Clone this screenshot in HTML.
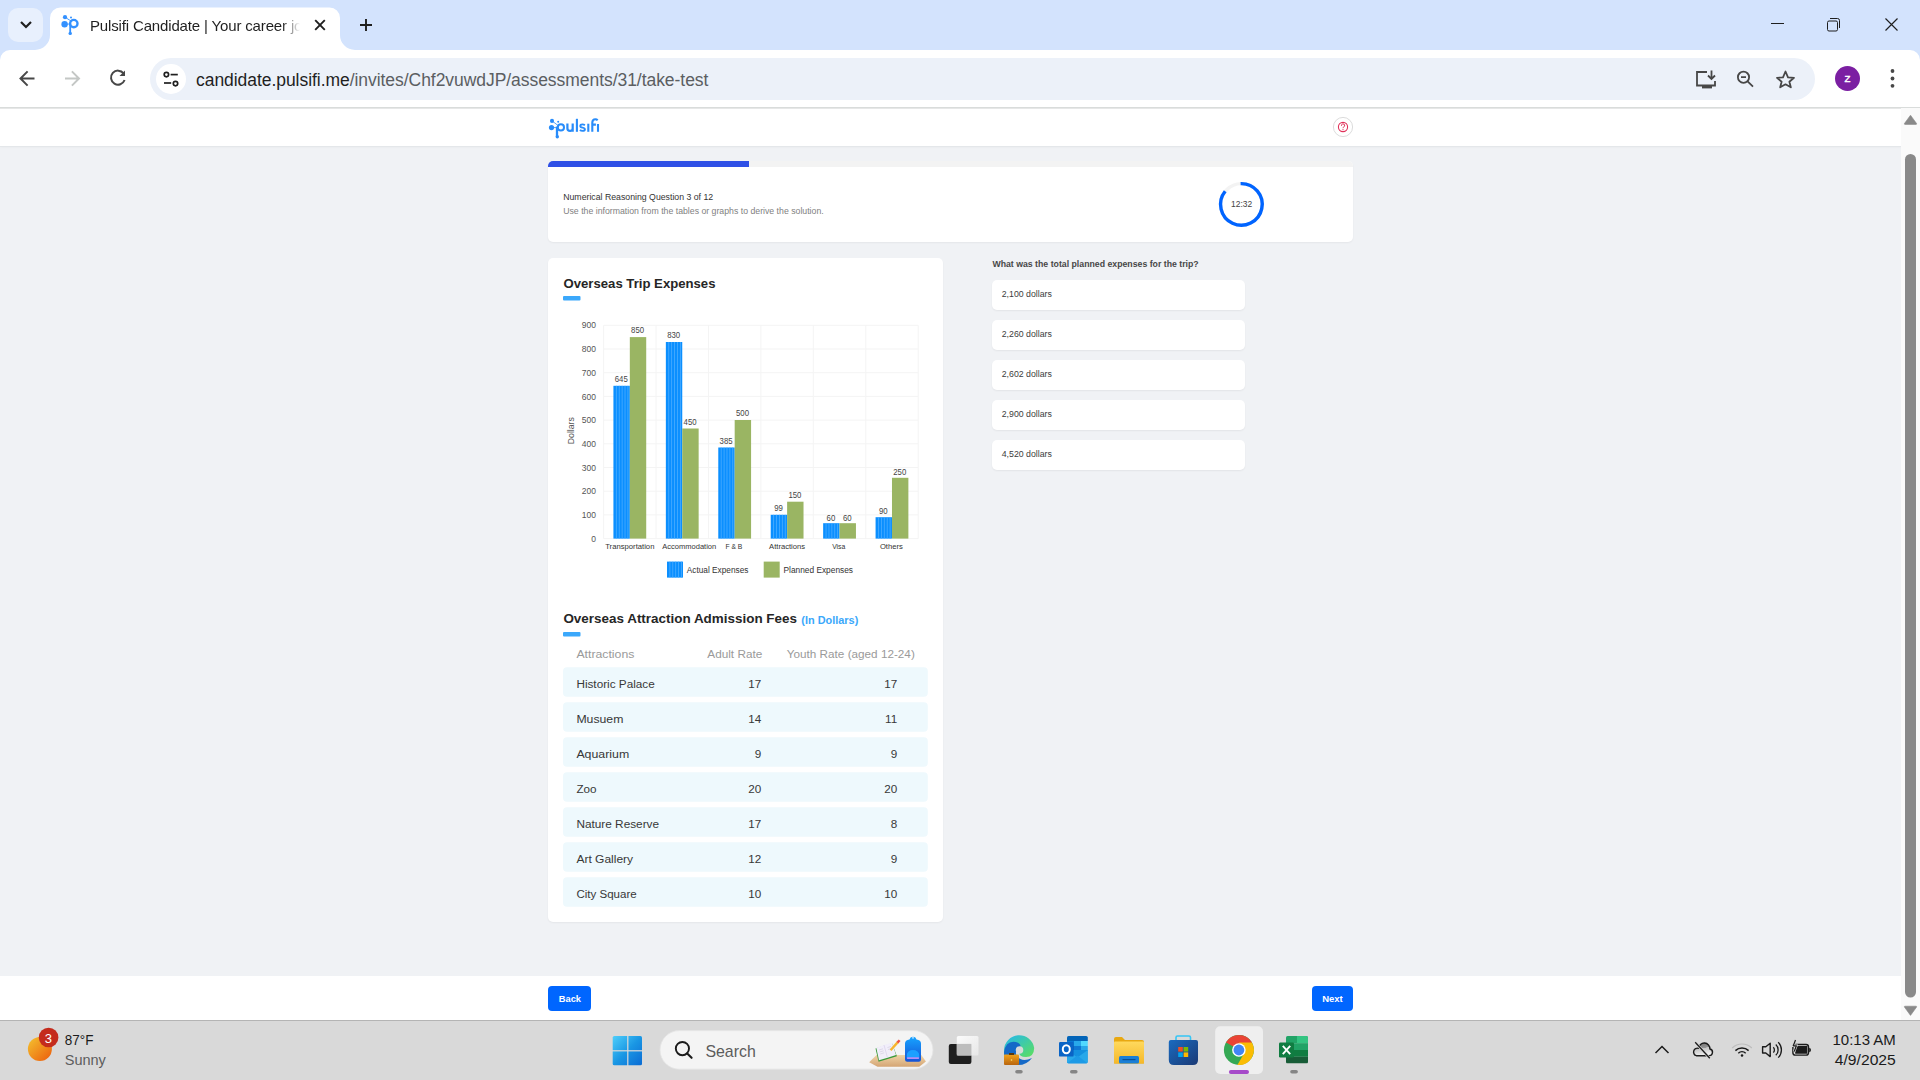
<!DOCTYPE html>
<html><head><meta charset="utf-8">
<style>
*{margin:0;padding:0;box-sizing:border-box}
html,body{width:1920px;height:1080px;overflow:hidden;background:#f0f2f5;font-family:"Liberation Sans",sans-serif}
.a{position:absolute}
#tabstrip{left:0;top:0;width:1920px;height:50px;background:#d3e3fd}
#toolbar{left:0;top:50px;width:1920px;height:57px;background:#fff;border-top-left-radius:10px;border-top-right-radius:10px}
#sep{left:0;top:107px;width:1920px;height:1px;background:#d4d7db}
#page{left:0;top:108px;width:1902px;height:912px;background:#f0f2f5;overflow:hidden}
#header{left:0;top:0;width:1902px;height:38px;background:#fff;box-shadow:0 1px 0 #e4e7ea,0 2px 2px rgba(0,0,0,0.025)}
#footer{left:0;top:868px;width:1902px;height:44px;background:#fff}
#scroll{left:1901px;top:108px;width:19px;height:912px;background:#fafafa}
#taskbar{left:0;top:1020px;width:1920px;height:60px;background:#dadada;border-top:1px solid #c4c4c4}
.card{background:#fff;border-radius:4px}
</style></head><body>

<svg class="a" style="left:0;top:0" width="1920" height="108" viewBox="0 0 1920 108">
  <rect x="0" y="0" width="1920" height="50" fill="#d3e3fd"/>
  <rect x="8" y="8" width="35" height="34" rx="10" fill="#e8f0fd"/>
  <path d="M21 22 L26 27 L31 22" fill="none" stroke="#1f1f1f" stroke-width="2.2" stroke-linecap="butt"/>
  <path fill="#fff" d="M35 50 A15 15 0 0 0 50 35 L50 18 A10.5 10.5 0 0 1 60.5 7.5 L329.5 7.5 A10.5 10.5 0 0 1 340 18 L340 35 A15 15 0 0 0 355 50 Z"/>
  <rect x="0" y="50" width="1920" height="57" fill="#fff"/>
  <path d="M0 60 A10 10 0 0 1 10 50 L0 50 Z" fill="#d3e3fd"/>
  <path d="M1920 60 A10 10 0 0 0 1910 50 L1920 50 Z" fill="#d3e3fd"/>
  <!-- favicon -->
  <g fill="#3391ff" stroke="#3391ff">
    <circle cx="65" cy="17.2" r="2.1" stroke="none"/>
    <circle cx="64.6" cy="24.2" r="3.2" stroke="none"/>
    <circle cx="71" cy="17.6" r="1" stroke="none"/>
    <circle cx="73.8" cy="23.6" r="3.7" fill="none" stroke-width="2.4"/>
    <path d="M70.2 23.5 L70.2 33" stroke-width="1.8" fill="none"/>
    <circle cx="70.2" cy="33.4" r="1.7" stroke="none"/>
    <path d="M65 17.2 L71 21 M64.6 24.2 L70 24" stroke-width="0.9" fill="none"/>
  </g>
  <!-- tab close -->
  <path d="M315.2 20.2 L324.8 29.8 M324.8 20.2 L315.2 29.8" stroke="#1f1f1f" stroke-width="1.9"/>
  <!-- new tab -->
  <path d="M360 25 L372 25 M366 19 L366 31" stroke="#1f1f1f" stroke-width="1.9"/>
  <!-- window controls -->
  <path d="M1771 23.5 L1784 23.5" stroke="#1f1f1f" stroke-width="1"/>
  <rect x="1827.5" y="21" width="10" height="10" rx="1.5" fill="none" stroke="#1f1f1f" stroke-width="1"/>
  <path d="M1830 18.5 L1837.5 18.5 A2 2 0 0 1 1839.5 20.5 L1839.5 28" fill="none" stroke="#1f1f1f" stroke-width="1"/>
  <path d="M1885.5 18.5 L1897.5 30.5 M1897.5 18.5 L1885.5 30.5" stroke="#1f1f1f" stroke-width="1.15"/>
  <!-- nav -->
  <path d="M34.5 78.5 L20.5 78.5 M27.6 71.4 L20.5 78.5 L27.6 85.6" fill="none" stroke="#474747" stroke-width="2"/>
  <path d="M65 78.5 L79 78.5 M71.9 71.4 L79 78.5 L71.9 85.6" fill="none" stroke="#c4c7c5" stroke-width="2"/>
  <path d="M123.6 73.4 A7 7 0 1 0 124.6 80" fill="none" stroke="#474747" stroke-width="2"/>
  <path d="M125 70.5 L125 76 L119.5 76 Z" fill="#474747"/>
  <!-- omnibox -->
  <rect x="150" y="58" width="1665" height="42" rx="21" fill="#ecf1f9"/>
  <circle cx="171" cy="79" r="15" fill="#fff"/>
  <g fill="none" stroke="#1f1f1f" stroke-width="1.7">
    <circle cx="166.4" cy="74.6" r="2.2"/>
    <path d="M170.6 74.6 L177.8 74.6"/>
    <circle cx="175.5" cy="83.6" r="2.2"/>
    <path d="M164 83 L171.2 83"/>
  </g>
  <!-- right icons -->
  <g fill="none" stroke="#474747" stroke-width="1.8">
    <path d="M1707 72 L1697 72 L1697 85.5 L1715 85.5 L1715 81"/>
    <path d="M1711.5 70.5 L1711.5 79 M1708 75.5 L1711.5 79 L1715 75.5"/>
    <circle cx="1743.5" cy="77.2" r="5.6"/>
    <path d="M1741 77.2 L1746 77.2 M1747.6 81.3 L1753 86.7"/>
    <path d="M1785.5 71.5 L1788 77.3 L1794 77.8 L1789.4 81.7 L1790.8 87.3 L1785.5 84.3 L1780.2 87.3 L1781.6 81.7 L1777 77.8 L1783 77.3 Z" stroke-linejoin="round"/>
  </g>
  <rect x="1702" y="86" width="10" height="2.4" fill="#474747"/>
  <circle cx="1847.5" cy="78.5" r="12.5" fill="#7b1fa2"/>
  <text x="1847.4" y="82" font-family="Liberation Sans" font-size="9.7" fill="#fff" stroke="#fff" stroke-width="0.35" text-anchor="middle">Z</text>
  <g fill="#474747"><circle cx="1892.5" cy="71" r="1.9"/><circle cx="1892.5" cy="78.5" r="1.9"/><circle cx="1892.5" cy="85.8" r="1.9"/></g>
  <rect x="0" y="107" width="1920" height="1" fill="#d9dcdb"/><rect x="0" y="108" width="1920" height="1" fill="#e8e9e9"/>
</svg>
<div class="a" style="left:90px;top:16px;width:212px;height:20px;overflow:hidden;white-space:nowrap;font-size:15px;letter-spacing:-0.15px;color:#1f1f1f;line-height:20px;-webkit-mask-image:linear-gradient(to right,#000 192px,transparent 210px)">Pulsifi Candidate | Your career journey</div>
<div class="a" style="left:196px;top:69px;white-space:nowrap;font-size:17.5px;letter-spacing:-0.05px;color:#1f1f1f;line-height:22px">candidate.pulsifi.me<span style="color:#5b5e62">/invites/Chf2vuwdJP/assessments/31/take-test</span></div>
<div id="page" class="a">
  <div id="header" class="a"></div>
  <!-- logo -->
  <svg class="a" style="left:540px;top:6px" width="64" height="30" viewBox="540 114 64 30">
    <g fill="#288cfa">
      <circle cx="552" cy="120.9" r="2.05"/>
      <circle cx="551.5" cy="127.6" r="2.6"/>
      <circle cx="558.2" cy="121.7" r="1"/>
      <circle cx="557.3" cy="136.7" r="1.7"/>
    </g>
    <g fill="none" stroke="#288cfa">
      <path d="M552 120.9 L557.8 125.3 M551.5 127.6 L557 127.6" stroke-width="0.8"/>
      <circle cx="560.9" cy="127.4" r="3.1" stroke-width="2"/>
      <path d="M557 126.5 L557 136.8" stroke-width="2.3"/>
      <path d="M567.4 123.4 L567.4 128.3 A2.65 2.65 0 0 0 572.7 128.3 L572.7 123.4 M572.7 128 L572.7 131.8" stroke-width="2.2"/>
      <path d="M576.9 118.8 L576.9 131.8" stroke-width="2.1"/>
      <path d="M584.9 125.1 Q583.8 124.4 582.4 124.4 Q580.3 124.4 580.3 125.9 Q580.3 127.2 582.6 127.6 Q584.9 128 584.9 129.5 Q584.9 130.9 582.5 130.9 Q580.9 130.9 579.9 130.1" stroke-width="1.9"/>
      <path d="M588.3 123.7 L588.3 131.8" stroke-width="2.1"/>
      <path d="M592.3 131.8 L592.3 122.8 Q592.3 119.3 595.4 119.3 Q596.8 119.3 597.6 120.3 M592.8 124.6 L595.9 124.6" stroke-width="2.1"/>
      <path d="M598 124 L598 131.8" stroke-width="2.1"/>
    </g>
  </svg>
  <!-- help -->
  <svg class="a" style="left:1332px;top:8px" width="22" height="22" viewBox="0 0 22 22">
    <circle cx="11" cy="11" r="9.6" fill="#fff" stroke="#dcdcdc" stroke-width="1"/>
    <circle cx="11" cy="11" r="4.6" fill="none" stroke="#e0325a" stroke-width="1.1"/>
    <path d="M9.5 9.8 A1.6 1.6 0 1 1 11.6 11 Q11 11.3 11 12.2" fill="none" stroke="#e0325a" stroke-width="1"/>
    <circle cx="11" cy="13.6" r="0.6" fill="#e0325a"/>
  </svg>
  <!-- question card -->
  <div class="a" style="left:548px;top:53px;width:805px;height:81px;background:#fff;border-radius:5px;overflow:hidden;box-shadow:0 1px 2px rgba(0,0,0,0.05)">
    <div class="a" style="left:0;top:0;width:805px;height:6px;background:#f3f3f3"></div>
    <div class="a" style="left:0;top:0;width:201px;height:6px;background:#2f50e6"></div>
  </div>
  <svg class="a" style="left:0;top:0" width="1902" height="912" viewBox="0 108 1902 912" font-family="Liberation Sans">
    <text x="563.2" y="199.8" font-size="9.1" fill="#333" textLength="150" lengthAdjust="spacingAndGlyphs">Numerical Reasoning Question 3 of 12</text>
    <text x="563.2" y="213.7" font-size="9.1" fill="#7f7f7f" textLength="260.5" lengthAdjust="spacingAndGlyphs">Use the information from the tables or graphs to derive the solution.</text>
    <circle cx="1241.4" cy="204.4" r="20.8" fill="none" stroke="#f3f3f3" stroke-width="3.4"/>
    <path d="M1240.6 183.6 A20.8 20.8 0 1 1 1225.2 191.3" fill="none" stroke="#0064ff" stroke-width="3.4"/>
    <text x="1231.1" y="207.1" font-size="9.6" fill="#444" textLength="21.1" lengthAdjust="spacingAndGlyphs">12:32</text>
  </svg>
  <!-- chart card -->
  <div class="a card" style="left:548px;top:150px;width:395px;height:664px;border-radius:5px;box-shadow:0 1px 2px rgba(0,0,0,0.05)"></div>
  
  <!-- question + options -->
  <svg class="a" style="left:0;top:0" width="1902" height="912" viewBox="0 108 1902 912" font-family="Liberation Sans">
    <text x="992.4" y="266.8" font-size="9" font-weight="bold" fill="#474747" textLength="206.3" lengthAdjust="spacingAndGlyphs">What was the total planned expenses for the trip?</text>
  </svg>
<div class="a" style="left:992px;top:172px;width:253px;height:30px;background:#fff;border-radius:5px;box-shadow:0 1px 2px rgba(0,0,0,0.06)"></div>
<div class="a" style="left:992px;top:212px;width:253px;height:30px;background:#fff;border-radius:5px;box-shadow:0 1px 2px rgba(0,0,0,0.06)"></div>
<div class="a" style="left:992px;top:252px;width:253px;height:30px;background:#fff;border-radius:5px;box-shadow:0 1px 2px rgba(0,0,0,0.06)"></div>
<div class="a" style="left:992px;top:292px;width:253px;height:30px;background:#fff;border-radius:5px;box-shadow:0 1px 2px rgba(0,0,0,0.06)"></div>
<div class="a" style="left:992px;top:332px;width:253px;height:30px;background:#fff;border-radius:5px;box-shadow:0 1px 2px rgba(0,0,0,0.06)"></div>
<svg class="a" style="left:0;top:0" width="1902" height="912" viewBox="0 108 1902 912" font-family="Liberation Sans">
<text x="1001.7" y="296.7" font-size="9.2" fill="#3c3c3c" textLength="50.2" lengthAdjust="spacingAndGlyphs">2,100 dollars</text>
<text x="1001.7" y="336.7" font-size="9.2" fill="#3c3c3c" textLength="50.2" lengthAdjust="spacingAndGlyphs">2,260 dollars</text>
<text x="1001.7" y="376.7" font-size="9.2" fill="#3c3c3c" textLength="50.2" lengthAdjust="spacingAndGlyphs">2,602 dollars</text>
<text x="1001.7" y="416.7" font-size="9.2" fill="#3c3c3c" textLength="50.2" lengthAdjust="spacingAndGlyphs">2,900 dollars</text>
<text x="1001.7" y="456.7" font-size="9.2" fill="#3c3c3c" textLength="50.2" lengthAdjust="spacingAndGlyphs">4,520 dollars</text>
</svg>
  <div id="footer" class="a"></div>
  <div class="a" style="left:548px;top:878px;width:43px;height:25px;background:#0066ff;border-radius:4px"></div>
  <div class="a" style="left:1312px;top:878px;width:41px;height:25px;background:#0066ff;border-radius:4px"></div>
  <svg class="a" style="left:0;top:0" width="1902" height="912" viewBox="0 108 1902 912" font-family="Liberation Sans">
    <text x="558.8" y="1002" font-size="9.6" font-weight="bold" fill="#fff" textLength="22.2" lengthAdjust="spacingAndGlyphs">Back</text>
    <text x="1322.2" y="1002" font-size="9.6" font-weight="bold" fill="#fff" textLength="20.6" lengthAdjust="spacingAndGlyphs">Next</text>
  </svg>
</div>
<div class="a" style="left:0;top:108px;width:1920px;height:1px;background:#e6e7e7"></div>
<!--CHART--><svg class="a" style="left:0;top:0;pointer-events:none" width="1920" height="1080" viewBox="0 0 1920 1080" font-family="Liberation Sans">
<defs><pattern id="stripe" patternUnits="userSpaceOnUse" x="0" y="0" width="3.1" height="10"><rect width="3.1" height="10" fill="#1890ff"/><rect x="2.2" width="0.9" height="10" fill="#5cb1ff"/></pattern></defs>
<text x="563.5" y="288" font-size="13.3" fill="#262626" text-anchor="start" font-weight="bold" textLength="152" lengthAdjust="spacingAndGlyphs">Overseas Trip Expenses</text>
<rect x="563" y="296" width="17.5" height="4.6" rx="1" fill="#3ba8fb"/>
<rect x="603.6" y="538.10" width="314.6" height="1" fill="#f4f4f4"/>
<text x="596" y="541.70" font-size="8.5" fill="#555" text-anchor="end" font-weight="normal">0</text>
<rect x="603.6" y="514.40" width="314.6" height="1" fill="#f4f4f4"/>
<text x="596" y="518.00" font-size="8.5" fill="#555" text-anchor="end" font-weight="normal">100</text>
<rect x="603.6" y="490.70" width="314.6" height="1" fill="#f4f4f4"/>
<text x="596" y="494.30" font-size="8.5" fill="#555" text-anchor="end" font-weight="normal">200</text>
<rect x="603.6" y="467.00" width="314.6" height="1" fill="#f4f4f4"/>
<text x="596" y="470.60" font-size="8.5" fill="#555" text-anchor="end" font-weight="normal">300</text>
<rect x="603.6" y="443.30" width="314.6" height="1" fill="#f4f4f4"/>
<text x="596" y="446.90" font-size="8.5" fill="#555" text-anchor="end" font-weight="normal">400</text>
<rect x="603.6" y="419.60" width="314.6" height="1" fill="#f4f4f4"/>
<text x="596" y="423.20" font-size="8.5" fill="#555" text-anchor="end" font-weight="normal">500</text>
<rect x="603.6" y="395.90" width="314.6" height="1" fill="#f4f4f4"/>
<text x="596" y="399.50" font-size="8.5" fill="#555" text-anchor="end" font-weight="normal">600</text>
<rect x="603.6" y="372.20" width="314.6" height="1" fill="#f4f4f4"/>
<text x="596" y="375.80" font-size="8.5" fill="#555" text-anchor="end" font-weight="normal">700</text>
<rect x="603.6" y="348.50" width="314.6" height="1" fill="#f4f4f4"/>
<text x="596" y="352.10" font-size="8.5" fill="#555" text-anchor="end" font-weight="normal">800</text>
<rect x="603.6" y="324.80" width="314.6" height="1" fill="#f4f4f4"/>
<text x="596" y="328.40" font-size="8.5" fill="#555" text-anchor="end" font-weight="normal">900</text>
<rect x="603.10" y="325.3" width="1" height="213.3" fill="#f4f4f4"/>
<rect x="655.53" y="325.3" width="1" height="213.3" fill="#f4f4f4"/>
<rect x="707.97" y="325.3" width="1" height="213.3" fill="#f4f4f4"/>
<rect x="760.40" y="325.3" width="1" height="213.3" fill="#f4f4f4"/>
<rect x="812.83" y="325.3" width="1" height="213.3" fill="#f4f4f4"/>
<rect x="865.27" y="325.3" width="1" height="213.3" fill="#f4f4f4"/>
<rect x="917.70" y="325.3" width="1" height="213.3" fill="#f4f4f4"/>
<text x="0" y="0" font-size="8.6" fill="#555" text-anchor="middle" transform="translate(573.6,430.7) rotate(-90)" textLength="27" lengthAdjust="spacingAndGlyphs">Dollars</text>
<rect x="613.42" y="385.80" width="16.4" height="152.80" fill="#0b8fff"/>
<rect x="615.92" y="385.80" width="0.8" height="152.80" fill="#4cadff"/>
<rect x="618.82" y="385.80" width="0.8" height="152.80" fill="#4cadff"/>
<rect x="621.72" y="385.80" width="0.8" height="152.80" fill="#4cadff"/>
<rect x="624.62" y="385.80" width="0.8" height="152.80" fill="#4cadff"/>
<rect x="627.52" y="385.80" width="0.8" height="152.80" fill="#4cadff"/>
<rect x="629.82" y="337.10" width="16.4" height="201.50" fill="#9ab563"/>
<text x="621.22" y="382.00" font-size="8.2" fill="#444" text-anchor="middle" font-weight="normal" textLength="13" lengthAdjust="spacingAndGlyphs">645</text>
<text x="637.62" y="333.00" font-size="8.2" fill="#444" text-anchor="middle" font-weight="normal" textLength="13" lengthAdjust="spacingAndGlyphs">850</text>
<text x="629.82" y="549" font-size="7.7" fill="#333" text-anchor="middle" font-weight="normal" textLength="49.2" lengthAdjust="spacingAndGlyphs">Transportation</text>
<rect x="665.85" y="342.00" width="16.4" height="196.60" fill="#0b8fff"/>
<rect x="668.35" y="342.00" width="0.8" height="196.60" fill="#4cadff"/>
<rect x="671.25" y="342.00" width="0.8" height="196.60" fill="#4cadff"/>
<rect x="674.15" y="342.00" width="0.8" height="196.60" fill="#4cadff"/>
<rect x="677.05" y="342.00" width="0.8" height="196.60" fill="#4cadff"/>
<rect x="679.95" y="342.00" width="0.8" height="196.60" fill="#4cadff"/>
<rect x="682.25" y="428.50" width="16.4" height="110.10" fill="#9ab563"/>
<text x="673.65" y="337.80" font-size="8.2" fill="#444" text-anchor="middle" font-weight="normal" textLength="13" lengthAdjust="spacingAndGlyphs">830</text>
<text x="690.05" y="425.20" font-size="8.2" fill="#444" text-anchor="middle" font-weight="normal" textLength="13" lengthAdjust="spacingAndGlyphs">450</text>
<text x="689.25" y="549" font-size="7.7" fill="#333" text-anchor="middle" font-weight="normal" textLength="54" lengthAdjust="spacingAndGlyphs">Accommodation</text>
<rect x="718.28" y="447.50" width="16.4" height="91.10" fill="#0b8fff"/>
<rect x="720.78" y="447.50" width="0.8" height="91.10" fill="#4cadff"/>
<rect x="723.68" y="447.50" width="0.8" height="91.10" fill="#4cadff"/>
<rect x="726.58" y="447.50" width="0.8" height="91.10" fill="#4cadff"/>
<rect x="729.48" y="447.50" width="0.8" height="91.10" fill="#4cadff"/>
<rect x="732.38" y="447.50" width="0.8" height="91.10" fill="#4cadff"/>
<rect x="734.68" y="420.00" width="16.4" height="118.60" fill="#9ab563"/>
<text x="726.08" y="443.90" font-size="8.2" fill="#444" text-anchor="middle" font-weight="normal" textLength="13" lengthAdjust="spacingAndGlyphs">385</text>
<text x="742.48" y="416.10" font-size="8.2" fill="#444" text-anchor="middle" font-weight="normal" textLength="13" lengthAdjust="spacingAndGlyphs">500</text>
<text x="733.88" y="549" font-size="7.7" fill="#333" text-anchor="middle" font-weight="normal" textLength="17" lengthAdjust="spacingAndGlyphs">F &amp; B</text>
<rect x="770.72" y="514.80" width="16.4" height="23.80" fill="#0b8fff"/>
<rect x="773.22" y="514.80" width="0.8" height="23.80" fill="#4cadff"/>
<rect x="776.12" y="514.80" width="0.8" height="23.80" fill="#4cadff"/>
<rect x="779.02" y="514.80" width="0.8" height="23.80" fill="#4cadff"/>
<rect x="781.92" y="514.80" width="0.8" height="23.80" fill="#4cadff"/>
<rect x="784.82" y="514.80" width="0.8" height="23.80" fill="#4cadff"/>
<rect x="787.12" y="501.70" width="16.4" height="36.90" fill="#9ab563"/>
<text x="778.52" y="510.70" font-size="8.2" fill="#444" text-anchor="middle" font-weight="normal" textLength="8.7" lengthAdjust="spacingAndGlyphs">99</text>
<text x="794.92" y="497.80" font-size="8.2" fill="#444" text-anchor="middle" font-weight="normal" textLength="13" lengthAdjust="spacingAndGlyphs">150</text>
<text x="787.12" y="549" font-size="7.7" fill="#333" text-anchor="middle" font-weight="normal" textLength="36" lengthAdjust="spacingAndGlyphs">Attractions</text>
<rect x="823.15" y="523.20" width="16.4" height="15.40" fill="#0b8fff"/>
<rect x="825.65" y="523.20" width="0.8" height="15.40" fill="#4cadff"/>
<rect x="828.55" y="523.20" width="0.8" height="15.40" fill="#4cadff"/>
<rect x="831.45" y="523.20" width="0.8" height="15.40" fill="#4cadff"/>
<rect x="834.35" y="523.20" width="0.8" height="15.40" fill="#4cadff"/>
<rect x="837.25" y="523.20" width="0.8" height="15.40" fill="#4cadff"/>
<rect x="839.55" y="523.20" width="16.4" height="15.40" fill="#9ab563"/>
<text x="830.95" y="521.30" font-size="8.2" fill="#444" text-anchor="middle" font-weight="normal" textLength="8.7" lengthAdjust="spacingAndGlyphs">60</text>
<text x="847.35" y="521.30" font-size="8.2" fill="#444" text-anchor="middle" font-weight="normal" textLength="8.7" lengthAdjust="spacingAndGlyphs">60</text>
<text x="838.75" y="549" font-size="7.7" fill="#333" text-anchor="middle" font-weight="normal" textLength="13.2" lengthAdjust="spacingAndGlyphs">Visa</text>
<rect x="875.58" y="517.20" width="16.4" height="21.40" fill="#0b8fff"/>
<rect x="878.08" y="517.20" width="0.8" height="21.40" fill="#4cadff"/>
<rect x="880.98" y="517.20" width="0.8" height="21.40" fill="#4cadff"/>
<rect x="883.88" y="517.20" width="0.8" height="21.40" fill="#4cadff"/>
<rect x="886.78" y="517.20" width="0.8" height="21.40" fill="#4cadff"/>
<rect x="889.68" y="517.20" width="0.8" height="21.40" fill="#4cadff"/>
<rect x="891.98" y="477.80" width="16.4" height="60.80" fill="#9ab563"/>
<text x="883.38" y="513.70" font-size="8.2" fill="#444" text-anchor="middle" font-weight="normal" textLength="8.7" lengthAdjust="spacingAndGlyphs">90</text>
<text x="899.78" y="474.60" font-size="8.2" fill="#444" text-anchor="middle" font-weight="normal" textLength="13" lengthAdjust="spacingAndGlyphs">250</text>
<text x="891.38" y="549" font-size="7.7" fill="#333" text-anchor="middle" font-weight="normal" textLength="23" lengthAdjust="spacingAndGlyphs">Others</text>
<rect x="667.00" y="561.60" width="16" height="16.00" fill="#0b8fff"/>
<rect x="669.50" y="561.60" width="0.8" height="16.00" fill="#4cadff"/>
<rect x="672.40" y="561.60" width="0.8" height="16.00" fill="#4cadff"/>
<rect x="675.30" y="561.60" width="0.8" height="16.00" fill="#4cadff"/>
<rect x="678.20" y="561.60" width="0.8" height="16.00" fill="#4cadff"/>
<rect x="681.10" y="561.60" width="0.8" height="16.00" fill="#4cadff"/>
<text x="686.8" y="572.7" font-size="8.3" fill="#333" text-anchor="start" font-weight="normal" textLength="61.6" lengthAdjust="spacingAndGlyphs">Actual Expenses</text>
<rect x="763.7" y="561.6" width="16" height="16" fill="#9ab563"/>
<text x="783.5" y="572.7" font-size="8.3" fill="#333" text-anchor="start" font-weight="normal" textLength="69.5" lengthAdjust="spacingAndGlyphs">Planned Expenses</text>
<text x="563.4" y="623.3" font-size="13.3" fill="#262626" text-anchor="start" font-weight="bold" textLength="233.6" lengthAdjust="spacingAndGlyphs">Overseas Attraction Admission Fees</text>
<text x="801.3" y="623.8" font-size="10.4" fill="#3ba8fb" text-anchor="start" font-weight="bold" textLength="57" lengthAdjust="spacingAndGlyphs">(In Dollars)</text>
<rect x="563" y="632" width="17.5" height="4.4" rx="1" fill="#3ba8fb"/>
<text x="576.4" y="657.6" font-size="11.5" fill="#9a9a9a" text-anchor="start" font-weight="normal" textLength="58" lengthAdjust="spacingAndGlyphs">Attractions</text>
<text x="707.3" y="657.6" font-size="11.5" fill="#9a9a9a" text-anchor="start" font-weight="normal" textLength="55" lengthAdjust="spacingAndGlyphs">Adult Rate</text>
<text x="786.8" y="657.6" font-size="11.5" fill="#9a9a9a" text-anchor="start" font-weight="normal" textLength="128" lengthAdjust="spacingAndGlyphs">Youth Rate (aged 12-24)</text>
<rect x="563" y="667.3" width="364.8" height="29.5" rx="4" fill="#eef9fd"/>
<text x="576.4" y="688.2" font-size="11.7" fill="#383838" text-anchor="start" font-weight="normal" textLength="78.4" lengthAdjust="spacingAndGlyphs">Historic Palace</text>
<text x="761.2" y="688.2" font-size="11.7" fill="#383838" text-anchor="end" font-weight="normal">17</text>
<text x="897.2" y="688.2" font-size="11.7" fill="#383838" text-anchor="end" font-weight="normal">17</text>
<rect x="563" y="702.3" width="364.8" height="29.5" rx="4" fill="#eef9fd"/>
<text x="576.4" y="723.2" font-size="11.7" fill="#383838" text-anchor="start" font-weight="normal" textLength="47" lengthAdjust="spacingAndGlyphs">Musuem</text>
<text x="761.2" y="723.2" font-size="11.7" fill="#383838" text-anchor="end" font-weight="normal">14</text>
<text x="897.2" y="723.2" font-size="11.7" fill="#383838" text-anchor="end" font-weight="normal">11</text>
<rect x="563" y="737.3" width="364.8" height="29.5" rx="4" fill="#eef9fd"/>
<text x="576.4" y="758.2" font-size="11.7" fill="#383838" text-anchor="start" font-weight="normal" textLength="52.8" lengthAdjust="spacingAndGlyphs">Aquarium</text>
<text x="761.2" y="758.2" font-size="11.7" fill="#383838" text-anchor="end" font-weight="normal">9</text>
<text x="897.2" y="758.2" font-size="11.7" fill="#383838" text-anchor="end" font-weight="normal">9</text>
<rect x="563" y="772.3" width="364.8" height="29.5" rx="4" fill="#eef9fd"/>
<text x="576.4" y="793.2" font-size="11.7" fill="#383838" text-anchor="start" font-weight="normal" textLength="20.1" lengthAdjust="spacingAndGlyphs">Zoo</text>
<text x="761.2" y="793.2" font-size="11.7" fill="#383838" text-anchor="end" font-weight="normal">20</text>
<text x="897.2" y="793.2" font-size="11.7" fill="#383838" text-anchor="end" font-weight="normal">20</text>
<rect x="563" y="807.3" width="364.8" height="29.5" rx="4" fill="#eef9fd"/>
<text x="576.4" y="828.2" font-size="11.7" fill="#383838" text-anchor="start" font-weight="normal" textLength="82.7" lengthAdjust="spacingAndGlyphs">Nature Reserve</text>
<text x="761.2" y="828.2" font-size="11.7" fill="#383838" text-anchor="end" font-weight="normal">17</text>
<text x="897.2" y="828.2" font-size="11.7" fill="#383838" text-anchor="end" font-weight="normal">8</text>
<rect x="563" y="842.3" width="364.8" height="29.5" rx="4" fill="#eef9fd"/>
<text x="576.4" y="863.2" font-size="11.7" fill="#383838" text-anchor="start" font-weight="normal" textLength="56.7" lengthAdjust="spacingAndGlyphs">Art Gallery</text>
<text x="761.2" y="863.2" font-size="11.7" fill="#383838" text-anchor="end" font-weight="normal">12</text>
<text x="897.2" y="863.2" font-size="11.7" fill="#383838" text-anchor="end" font-weight="normal">9</text>
<rect x="563" y="877.3" width="364.8" height="29.5" rx="4" fill="#eef9fd"/>
<text x="576.4" y="898.2" font-size="11.7" fill="#383838" text-anchor="start" font-weight="normal" textLength="60.3" lengthAdjust="spacingAndGlyphs">City Square</text>
<text x="761.2" y="898.2" font-size="11.7" fill="#383838" text-anchor="end" font-weight="normal">10</text>
<text x="897.2" y="898.2" font-size="11.7" fill="#383838" text-anchor="end" font-weight="normal">10</text>
</svg>
<!--/CHART-->
<svg class="a" style="left:1901px;top:108px" width="19" height="912" viewBox="1901 108 19 912">
  <rect x="1901" y="108" width="19" height="912" fill="#fafafa"/>
  <path d="M1910.5 115.2 L1916.6 123.6 Q1917 124.4 1916 124.4 L1905 124.4 Q1904 124.4 1904.4 123.6 Z" fill="#898989" stroke="#898989" stroke-width="0.6" stroke-linejoin="round"/>
  <rect x="1905" y="154" width="11" height="843.5" rx="5.5" fill="#898989"/>
  <path d="M1910.5 1015.4 L1916.6 1007 Q1917 1006.2 1916 1006.2 L1905 1006.2 Q1904 1006.2 1904.4 1007 Z" fill="#898989" stroke="#898989" stroke-width="0.6" stroke-linejoin="round"/>
</svg>
<!--TASK--><svg class="a" style="left:0;top:1020px" width="1920" height="60" viewBox="0 1020 1920 60" font-family="Liberation Sans">
<defs>
<linearGradient id="sun" x1="0" y1="0" x2="1" y2="1"><stop offset="0" stop-color="#f4c430"/><stop offset="1" stop-color="#ec5b0c"/></linearGradient>
<linearGradient id="win" gradientUnits="userSpaceOnUse" x1="612" y1="1036" x2="642" y2="1066"><stop offset="0" stop-color="#50d0fb"/><stop offset="0.5" stop-color="#1a97e4"/><stop offset="1" stop-color="#0a6ad3"/></linearGradient>
<linearGradient id="edge1" x1="0" y1="0" x2="1" y2="1"><stop offset="0" stop-color="#22b6f2"/><stop offset="1" stop-color="#5ee05a"/></linearGradient>
<linearGradient id="brief" x1="0" y1="0" x2="0" y2="1"><stop offset="0" stop-color="#f2a31a"/><stop offset="1" stop-color="#b8650f"/></linearGradient>
<linearGradient id="store" x1="0" y1="0" x2="1" y2="1"><stop offset="0" stop-color="#1a6bc0"/><stop offset="1" stop-color="#1b3a75"/></linearGradient>
<linearGradient id="folder" x1="0" y1="0" x2="0" y2="1"><stop offset="0" stop-color="#ffd95e"/><stop offset="1" stop-color="#f5b829"/></linearGradient>
<linearGradient id="tv" x1="0" y1="0" x2="1" y2="1"><stop offset="0" stop-color="#fdfdfd"/><stop offset="1" stop-color="#e8e8e8"/></linearGradient>
</defs>
<rect x="0" y="1020" width="1920" height="60" fill="#d9d9d9"/>
<rect x="0" y="1020" width="1920" height="1" fill="#b4b4b4"/>
<circle cx="39.9" cy="1048.9" r="12" fill="url(#sun)"/>
<circle cx="48.6" cy="1037.5" r="9.8" fill="#c42b1c"/>
<text x="48.4" y="1042.8" font-size="13" fill="#fff" text-anchor="middle">3</text>
<text x="64.7" y="1044.7" font-size="14.8" fill="#1b1b1b" textLength="28.7" lengthAdjust="spacingAndGlyphs">87°F</text>
<text x="64.7" y="1064.7" font-size="14.8" fill="#5d5d5d" textLength="41.2" lengthAdjust="spacingAndGlyphs">Sunny</text>
<rect x="612.7" y="1036" width="29.3" height="29.3" rx="1.6" fill="url(#win)"/>
<rect x="627.2" y="1035" width="1.2" height="31.5" fill="#dedad8"/><rect x="611.5" y="1050.2" width="31.5" height="1.2" fill="#dedad8"/>
<rect x="660" y="1030.6" width="273" height="38.6" rx="19.3" fill="#f4f4f4" stroke="#e3e3e3" stroke-width="0.8"/>
<circle cx="682.4" cy="1048.6" r="6.6" fill="none" stroke="#1b1b1b" stroke-width="1.9"/>
<path d="M687.2 1053.4 L691.6 1057.8" stroke="#1b1b1b" stroke-width="2.1" stroke-linecap="round"/>
<text x="705.4" y="1056.8" font-size="17" fill="#5c5c5c" textLength="50.4" lengthAdjust="spacingAndGlyphs">Search</text>
<defs><linearGradient id="plat" x1="0" y1="0" x2="0" y2="1"><stop offset="0" stop-color="#efd3a6"/><stop offset="1" stop-color="#d4a574"/></linearGradient><linearGradient id="bp" x1="0" y1="0" x2="0" y2="1"><stop offset="0" stop-color="#17a4ff"/><stop offset="1" stop-color="#1552d6"/></linearGradient></defs>
<path d="M869.2 1062.2 L876.5 1055.1 L921.3 1055.1 L925.9 1061.5 L919.2 1066.7 L877.5 1066.7 Z" fill="url(#plat)"/>
<path d="M875.5 1048.6 L892 1043.2 L896.9 1056.3 L878.6 1061.8 Z" fill="#3a9a3a"/>
<path d="M876.3 1047.8 L884 1045 L892 1042.6 L896 1055 L887.5 1057.8 L879 1060.3 Z" fill="#f1eefa"/>
<path d="M884 1045 L887.5 1057.8" stroke="#d4cbe6" stroke-width="0.6"/>
<path d="M879 1050 L883 1048.8 M879.6 1052 L883.6 1050.8 M880.2 1054 L884.2 1052.8 M887.4 1047.6 L891 1046.4 M888 1049.6 L891.6 1048.4" stroke="#c9c3d6" stroke-width="0.5"/>
<path d="M890.6 1050.2 L897.6 1042.4" stroke="#f6b52e" stroke-width="2.4"/>
<path d="M897.4 1042.6 L899.6 1040.2" stroke="#f0523f" stroke-width="2.4"/>
<path d="M905 1043.5 Q905 1040.2 909.5 1039.6 L910.6 1037.6 Q913 1035.8 915.4 1037.6 L916.5 1039.6 Q921 1040.2 921 1043.5 L921 1059.6 Q921 1061.8 918.8 1061.8 L907.2 1061.8 Q905 1061.8 905 1059.6 Z" fill="url(#bp)"/>
<circle cx="913" cy="1037.8" r="0.9" fill="#cfe8ff"/>
<path d="M906.8 1058 L906.8 1055 A6.2 5 0 0 1 919.2 1055 L919.2 1058 Z" fill="#1ca0ff"/>
<rect x="906.8" y="1057.2" width="12.4" height="1.8" rx="0.9" fill="#b68cf5"/>
<rect x="948.8" y="1043.9" width="22.6" height="20" rx="2" fill="#1e1e1e"/>
<rect x="956.8" y="1036" width="21.7" height="19.4" rx="1.5" fill="url(#tv)" opacity="0.95"/>
<rect x="956.8" y="1043.9" width="14.6" height="11.5" fill="#bdbdbd"/>
<path d="M1004 1050 A15.2 15.2 0 0 1 1034.2 1048 Q1034 1057 1026 1057 Q1018 1057 1019 1050 A4 4 0 0 0 1016 1046 Q1008 1046 1004 1056 Z" fill="url(#edge1)"/>
<path d="M1004 1052 Q1006 1040 1016 1042 Q1022 1044 1020 1048 A5 5 0 0 0 1017 1056 Q1022 1063 1032 1058 Q1026 1066 1016 1065 Q1004 1063 1004 1052 Z" fill="#1569c7"/>
<circle cx="1019.5" cy="1050" r="3.8" fill="#d9d9d9"/>
<rect x="1004" y="1054.5" width="15" height="10.5" rx="1" fill="url(#brief)"/>
<rect x="1009" y="1053" width="5" height="2" fill="#5a3a10"/><circle cx="1011.5" cy="1060" r="0.8" fill="#ffe27a"/>
<rect x="1015.2" y="1070" width="7.5" height="3.5" rx="1.75" fill="#858585"/>
<clipPath id="ol"><rect x="1067" y="1036" width="20.8" height="27.4" rx="1.6"/></clipPath>
<g clip-path="url(#ol)"><rect x="1067" y="1036" width="7" height="5" fill="#0364b8"/><rect x="1074" y="1036" width="7" height="5" fill="#0364b8"/><rect x="1081" y="1036" width="7" height="5" fill="#0364b8"/><rect x="1067" y="1041" width="7" height="5" fill="#0a78d4"/><rect x="1074" y="1041" width="7" height="5" fill="#28a8ea"/><rect x="1081" y="1041" width="7" height="5" fill="#50d9ff"/><rect x="1067" y="1046" width="7" height="5" fill="#0a64b8"/><rect x="1074" y="1046" width="7" height="5" fill="#0f78d4"/><rect x="1081" y="1046" width="7" height="5" fill="#28a8ea"/><rect x="1067" y="1050" width="20.8" height="13.4" fill="#1490df"/><path d="M1067 1050 L1077.4 1057.5 L1087.8 1050 L1087.8 1063.4 L1067 1063.4 Z" fill="#28a8ea"/><path d="M1067 1063.4 L1077.4 1055.5 L1087.8 1063.4 Z" fill="#1d9ae6"/></g>
<rect x="1059" y="1042" width="14.6" height="14.6" rx="1.2" fill="#0a64c6"/>
<ellipse cx="1066.3" cy="1049.3" rx="3.5" ry="4" fill="none" stroke="#fff" stroke-width="2"/>
<rect x="1070" y="1070" width="7.6" height="3.5" rx="1.75" fill="#858585"/>
<path d="M1114 1039 Q1114 1037 1116 1037 L1122 1037 L1125 1040 L1142 1040 Q1144 1040 1144 1042 L1144 1063.5 L1114 1063.5 Z" fill="#e8a812"/>
<rect x="1114" y="1041.5" width="30" height="22" rx="1" fill="url(#folder)"/>
<rect x="1119" y="1056" width="20" height="7.5" rx="1.5" fill="#1b7fd6"/>
<rect x="1122.5" y="1059" width="13" height="1.2" fill="#0b4f94"/>
<path d="M1176 1041 L1176 1037.5 Q1176 1036 1177.5 1036 L1189 1036 Q1190.5 1036 1190.5 1037.5 L1190.5 1041" fill="none" stroke="#35c5f5" stroke-width="1.6"/>
<path d="M1168.8 1042 Q1168.8 1040 1170.8 1040 L1196 1040 Q1198 1040 1198 1042 L1198 1060 Q1198 1065 1193 1065 L1173.8 1065 Q1168.8 1065 1168.8 1060 Z" fill="url(#store)"/>
<rect x="1178.2" y="1047" width="4.6" height="4.6" fill="#f25022"/><rect x="1183.6" y="1047" width="4.6" height="4.6" fill="#7fba00"/><rect x="1178.2" y="1052.4" width="4.6" height="4.6" fill="#00a4ef"/><rect x="1183.6" y="1052.4" width="4.6" height="4.6" fill="#ffb900"/>
<rect x="1215.2" y="1026.3" width="47.8" height="47.6" rx="5" fill="#efefef"/>
<g transform="translate(1238.9,1050)"><path d="M0 -15 A15 15 0 0 1 12.99 -7.5 L0 -7.5 Z" fill="#ea4335"/><circle r="15" fill="#34a853"/><path d="M0 0 L-12.99 -7.5 A15 15 0 0 1 12.99 -7.5 Z" fill="#ea4335"/><path d="M0 -7.5 L12.99 -7.5 A15 15 0 0 1 -1.5 14.92 L6.5 1 Z" fill="#fbbc04"/><path d="M-12.99 -7.5 L-6.5 3.75 L0 0 Z" fill="#34a853"/><circle r="6.8" fill="#fff"/><circle r="5.4" fill="#4285f4"/></g>
<rect x="1228.9" y="1070" width="20.1" height="3.9" rx="1.95" fill="#a64ac9"/>
<clipPath id="xl"><rect x="1286" y="1036" width="22" height="27.5" rx="1.6"/></clipPath>
<g clip-path="url(#xl)"><rect x="1286" y="1036" width="22" height="7.2" fill="#21a366"/><rect x="1297" y="1036" width="11" height="7.2" fill="#33c481"/><rect x="1286" y="1043.2" width="22" height="6.8" fill="#21a366"/><rect x="1286" y="1050" width="22" height="6.8" fill="#107c41"/><rect x="1286" y="1056.8" width="22" height="6.7" fill="#185c37"/></g>
<rect x="1279" y="1042.5" width="15" height="15" rx="1.2" fill="#107c41"/>
<path d="M1282.8 1045.8 L1290.2 1054.2 M1290.2 1045.8 L1282.8 1054.2" stroke="#fff" stroke-width="1.9"/>
<rect x="1290.2" y="1070" width="7.7" height="3.5" rx="1.75" fill="#858585"/>
<path d="M1655.5 1053 L1662 1046.5 L1668.5 1053" fill="none" stroke="#1b1b1b" stroke-width="1.5"/>
<defs><linearGradient id="cld" x1="0" y1="0" x2="0.3" y2="1"><stop offset="0" stop-color="#6a6a6a"/><stop offset="0.5" stop-color="#959595"/><stop offset="0.52" stop-color="#c4c4c4"/><stop offset="1" stop-color="#eeeeee"/></linearGradient></defs><path d="M1696.3 1055.7 L1709 1055.7 A3.4 3.4 0 0 0 1709.9 1049 A5.4 5.4 0 0 0 1698.6 1048.3 A3.8 3.8 0 0 0 1696.3 1055.7 Z" fill="url(#cld)" stroke="#1b1b1b" stroke-width="1.4" stroke-linejoin="round"/>
<path d="M1695.2 1042.3 L1709.8 1058.3" stroke="#d9d9d9" stroke-width="2.6"/><path d="M1695.2 1042.3 L1709.8 1058.3" stroke="#1b1b1b" stroke-width="1.3"/>
<path d="M1732.2 1048 A14 14 0 0 1 1751.8 1048" fill="none" stroke="#bdbdbd" stroke-width="1.2"/>
<path d="M1735.4 1050.6 A9.6 9.6 0 0 1 1748.6 1050.6 M1738.3 1053.2 A5.6 5.6 0 0 1 1745.7 1053.2" fill="none" stroke="#1b1b1b" stroke-width="1.5"/>
<circle cx="1742" cy="1055.4" r="1.25" fill="#1b1b1b"/>
<path d="M1762.6 1046.8 L1765.8 1046.8 L1770.2 1043.2 L1770.2 1056.6 L1765.8 1053 L1762.6 1053 Z" fill="none" stroke="#1b1b1b" stroke-width="1.4" stroke-linejoin="round"/>
<path d="M1773.3 1047.3 A3.6 3.6 0 0 1 1773.3 1052.5 M1775.8 1044.6 A7.2 7.2 0 0 1 1775.8 1055.2 M1778.2 1042.2 A10.8 10.8 0 0 1 1778.2 1057.6" fill="none" stroke="#1b1b1b" stroke-width="1.3"/>
<rect x="1792.9" y="1044.5" width="15.6" height="10.6" rx="2.4" fill="none" stroke="#1b1b1b" stroke-width="1.4"/>
<path d="M1809.2 1047.8 A2.3 2.3 0 0 1 1809.2 1052.3 Z" fill="#1b1b1b"/>
<path d="M1797.4 1045.9 L1807.3 1045.9 L1807.3 1053.7 L1795.2 1053.7 L1795.2 1049.5 Z" fill="#1b1b1b"/>
<path d="M1795.5 1040 L1793.3 1045.8 L1796.4 1045.8 L1794.2 1051.5" fill="none" stroke="#d9d9d9" stroke-width="2.4"/>
<path d="M1795.5 1040 L1793.3 1045.8 L1796.4 1045.8 L1794.2 1051.5" fill="none" stroke="#1b1b1b" stroke-width="1.2" stroke-linejoin="round"/>
<text x="1832.5" y="1045" font-size="14.8" fill="#1b1b1b" textLength="63.3" lengthAdjust="spacingAndGlyphs">10:13 AM</text>
<text x="1834.8" y="1064.5" font-size="14.8" fill="#1b1b1b" textLength="61" lengthAdjust="spacingAndGlyphs">4/9/2025</text>
</svg>
<!--/TASK-->
</body></html>
